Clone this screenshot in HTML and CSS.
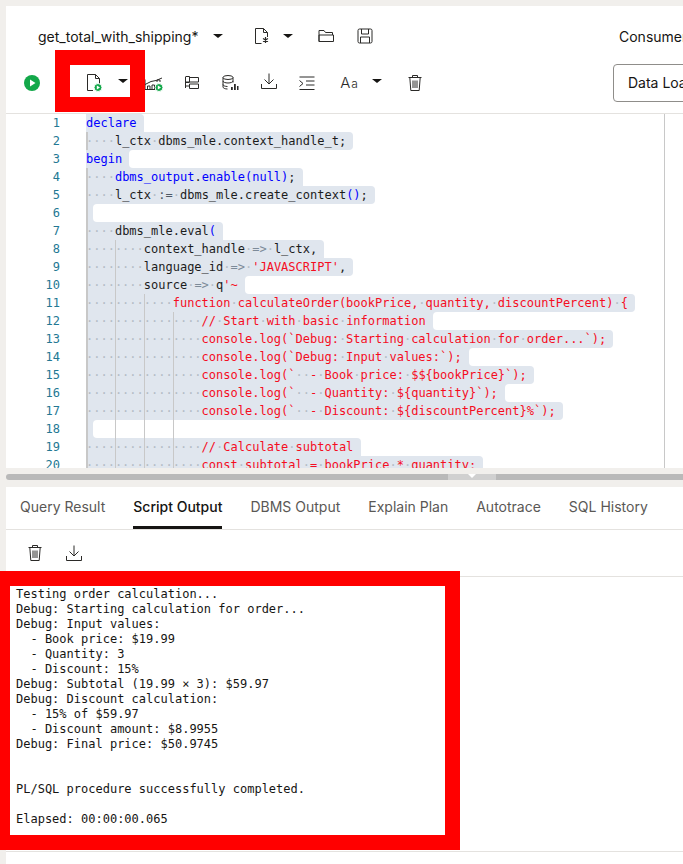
FILE: index.html
```html
<!DOCTYPE html>
<html lang="en">
<head>
<meta charset="utf-8">
<title>SQL Worksheet</title>
<link rel="stylesheet" href="styles.css">
</head>
<body>
<main class="panel">
  <header class="head">
    <div class="row row-one">
      <span class="title">get_total_with_shipping*</span>
      <span class="cell caret-cell title-caret"><svg class="caret" viewBox="0 0 10 4"><path d="M0 0h10L5 4z"/></svg></span>
      <span class="cell new-cell"><svg class="ic" width="20" height="20" viewBox="0 0 20 20"><path d="M10.500 17.500H4.500V2.500h8l4 4v4.500M12.500 2.500v4h4"/><path d="M14.500 11v6M12 12.500l5 3M17 12.500l-5 3" class="thin"/></svg></span>
      <span class="cell caret-cell"><svg class="caret" viewBox="0 0 10 4"><path d="M0 0h10L5 4z"/></svg></span>
      <span class="cell folder-cell"><svg class="ic" width="20" height="20" viewBox="0 0 20 20"><path d="M3 15.500V4.500h5l1.500 2h7v2.500M3 9h14.500v6.500H3z"/></svg></span>
      <span class="cell"><svg class="ic" width="20" height="20" viewBox="0 0 20 20"><path d="M3 4.500A1.500 1.500 0 0 1 4.500 3h11A1.500 1.500 0 0 1 17 4.500v11a1.500 1.500 0 0 1-1.500 1.500h-11A1.500 1.500 0 0 1 3 15.500zM6.500 3v5h7V3M5.500 17v-6h9v6"/></svg></span>
      <span class="schema">Consumer</span>
    </div>
    <div class="row row-two">
      <span class="cell"><svg width="18" height="18" viewBox="0 0 18 18"><circle cx="9" cy="9" r="8" fill="#13a84a"/><path d="M7 5.500l5.500 3.500L7 12.500z" fill="#fff"/></svg></span>
      <span class="cell run-file"><svg class="ic" width="20" height="20" viewBox="0 0 20 20"><path d="M9 17.500H3.500V1.500h8l4 4v5M11.500 1.500v4h4"/><circle cx="14" cy="14.500" r="4" class="go"/><path d="M12.800 12.500l3.200 2-3.200 2z" class="tri"/></svg></span>
      <span class="cell caret-cell"><svg class="caret" viewBox="0 0 10 4"><path d="M0 0h10L5 4z"/></svg></span>
      <span class="cell chart-cell"><svg class="ic" width="22" height="20" viewBox="0 0 22 20"><path d="M2 6.500v10h12M2 11.500l6-3 5-1 6-2.500M4.500 16v-3h2.500v3M9 16v-4h2.500v4M14 9V7h3v2"/><circle cx="16" cy="14.500" r="4" class="go"/><path d="M14.800 12.500l3.200 2-3.200 2z" class="tri"/></svg></span>
      <span class="cell"><svg class="ic" width="20" height="20" viewBox="0 0 20 20"><path d="M3.500 4v11M3.500 9.500h4M3.500 3.500h4v5.500h-4M7.500 4.500h9v4.500h-9zM7.500 11h9v4.500h-9zM3.500 13h4"/></svg></span>
      <span class="cell"><svg class="ic" width="20" height="20" viewBox="0 0 20 20"><ellipse cx="8" cy="4.500" rx="5" ry="2"/><path d="M3 4.500v9.500c0 1.100 2 2 4.500 2M13 4.500v5M3 8c0 1.100 2.200 2 5 2s5-.9 5-2M3 11.500c0 1.100 2 2 4.500 2"/><path d="M11 17v-3h1.800v3zM14 17v-6h1.800v6zM17 17v-4h1.500v4z" class="bars"/></svg></span>
      <span class="cell dl-cell"><svg class="ic" width="20" height="20" viewBox="0 0 20 20"><path d="M10 .500V11M5.500 6.500L10 11l4.500-4.500M2.500 11v4.500h15V11"/></svg></span>
      <span class="cell"><svg class="ic" width="20" height="20" viewBox="0 0 20 20"><path d="M2.500 4h15M9 8h8.500M9 12h8.500M2.500 16.500h15M2.500 7.500l3.500 3-3.500 3"/></svg></span>
      <span class="aa">A<small>a</small></span>
      <span class="cell caret-cell"><svg class="caret" viewBox="0 0 10 4"><path d="M0 0h10L5 4z"/></svg></span>
      <span class="cell trash-cell"><svg class="ic" width="20" height="20" viewBox="0 0 20 20"><path d="M3.500 4.500h13M7.500 4.500V2.500h5v2M4.800 4.500l1 13h8.400l1-13M8 7.500v7.500M10 7.500v7.500M12 7.500v7.500"/></svg></span>
      <button class="load">Data Load</button>
    </div>
  </header>

  <section class="editor">
    <div class="ln u"><span class="no">1</span><span class="code"><b>declare</b></span></div>
    <div class="ln"><span class="no">2</span><span class="code"><i>····</i>l_ctx<i>·</i>dbms_mle.context_handle_t;</span></div>
    <div class="ln n"><span class="no">3</span><span class="code"><b>begin</b></span></div>
    <div class="ln u"><span class="no">4</span><span class="code"><i>····</i><b>dbms_output</b>.<b>enable(null)</b>;</span></div>
    <div class="ln"><span class="no">5</span><span class="code"><i>····</i>l_ctx<i>·</i><em class="assign">:=</em><i>·</i>dbms_mle.create_context<b>()</b>;</span></div>
    <div class="ln n"><span class="no">6</span><span class="code"></span></div>
    <div class="ln u"><span class="no">7</span><span class="code"><i>····</i>dbms_mle.eval<b>(</b></span></div>
    <div class="ln u"><span class="no">8</span><span class="code"><i>········</i>context_handle<i>·</i><em>=&gt;</em><i>·</i>l_ctx,</span></div>
    <div class="ln"><span class="no">9</span><span class="code"><i>········</i>language_id<i>·</i><em>=&gt;</em><i>·</i><s>'JAVASCRIPT'</s>,</span></div>
    <div class="ln n"><span class="no">10</span><span class="code"><i>········</i>source<i>·</i><em>=&gt;</em><i>·</i>q<s>'~</s></span></div>
    <div class="ln"><span class="no">11</span><span class="code"><i>············</i><s>function<i>·</i>calculateOrder(bookPrice,<i>·</i>quantity,<i>·</i>discountPercent)<i>·</i>{</s></span></div>
    <div class="ln n"><span class="no">12</span><span class="code"><i>················</i><s>//<i>·</i>Start<i>·</i>with<i>·</i>basic<i>·</i>information</s></span></div>
    <div class="ln"><span class="no">13</span><span class="code"><i>················</i><s>console.log(`Debug:<i>·</i>Starting<i>·</i>calculation<i>·</i>for<i>·</i>order...`);</s></span></div>
    <div class="ln n"><span class="no">14</span><span class="code"><i>················</i><s>console.log(`Debug:<i>·</i>Input<i>·</i>values:`);</s></span></div>
    <div class="ln"><span class="no">15</span><span class="code"><i>················</i><s>console.log(`<i>··</i>-<i>·</i>Book<i>·</i>price:<i>·</i>$${bookPrice}`);</s></span></div>
    <div class="ln n"><span class="no">16</span><span class="code"><i>················</i><s>console.log(`<i>··</i>-<i>·</i>Quantity:<i>·</i>${quantity}`);</s></span></div>
    <div class="ln"><span class="no">17</span><span class="code"><i>················</i><s>console.log(`<i>··</i>-<i>·</i>Discount:<i>·</i>${discountPercent}%`);</s></span></div>
    <div class="ln n"><span class="no">18</span><span class="code"></span></div>
    <div class="ln u"><span class="no">19</span><span class="code"><i>················</i><s>//<i>·</i>Calculate<i>·</i>subtotal</s></span></div>
    <div class="ln"><span class="no">20</span><span class="code"><i>················</i><s>const<i>·</i>subtotal<i>·</i>=<i>·</i>bookPrice<i>·</i>*<i>·</i>quantity;</s></span></div>
    <span class="guide base-a"></span>
    <span class="guide base-b"></span>
    <span class="guide g1"></span>
    <span class="guide g2"></span>
    <span class="guide g3"></span>
    <span class="guide rail"></span>
  </section>

  <div class="split"><span class="grip"><svg width="8" height="4" viewBox="0 0 8 4"><path d="M0 0h8L4 4z" fill="#fff"/></svg></span></div>

  <nav class="tabs">
    <span class="tab">Query Result</span>
    <span class="tab on">Script Output</span>
    <span class="tab">DBMS Output</span>
    <span class="tab">Explain Plan</span>
    <span class="tab">Autotrace</span>
    <span class="tab">SQL History</span>
  </nav>

  <div class="out-bar">
    <span class="cell"><svg class="ic" width="20" height="20" viewBox="0 0 20 20"><path d="M3.500 4.500h13M7.500 4.500V2.500h5v2M4.800 4.500l1 13h8.400l1-13M8 7.500v7.500M10 7.500v7.500M12 7.500v7.500"/></svg></span>
    <span class="cell"><svg class="ic" width="20" height="20" viewBox="0 0 20 20"><path d="M10 2.500V13M5.500 8.500L10 13l4.500-4.500M2.500 13v4.500h15V13"/></svg></span>
  </div>

  <pre class="output">Testing order calculation...
Debug: Starting calculation for order...
Debug: Input values:
  - Book price: $19.99
  - Quantity: 3
  - Discount: 15%
Debug: Subtotal (19.99 × 3): $59.97
Debug: Discount calculation:
  - 15% of $59.97
  - Discount amount: $8.9955
Debug: Final price: $50.9745


PL/SQL procedure successfully completed.

Elapsed: 00:00:00.065</pre>
  <div class="foot"></div>
</main>
<div class="mark mark-run"></div>
<div class="mark mark-out"></div>
</body>
</html>
```
FILE: styles.css
```css
* { box-sizing: border-box; }
html, body { height: 864px; overflow: hidden; }
body {
  margin: 0;
  background: #f1efec;
  font-family: "Inter", "Liberation Sans", sans-serif;
  color: #161513;
  position: relative;
}
.panel {
  margin: 6px 0 0 6px;
  width: 720px;
  background: #fff;
  display: flex;
  flex-direction: column;
  height: 858px;
}
.head { height: 108px; border-bottom: 1px solid #e4e2df; }
.row { display: flex; align-items: center; white-space: nowrap; }
.row-one { height: 50px; padding: 10px 0 0 32px; }
.row-two { height: 50px; padding: 3px 0 0 7px; }
.cell { width: 38px; height: 24px; display: flex; align-items: center; justify-content: center; flex: none; }
.caret-cell { width: 20px; }
.title { font-size: 14px; width: 161px; }
.title-caret { margin-left: 9px; }
.new-cell { margin-left: 16px; width: 34px; }
.folder-cell { margin-left: 8px; width: 40px; }
.schema { font-size: 14px; margin-left: 235px; }
.caret { width: 10px; height: 4px; fill: #161513; }
.row-one .caret { margin-top: -1px; }
.row-two .caret { margin-top: -3px; }
.ic { fill: none; stroke: #2b2a28; stroke-width: 1; }
.ic .thin { stroke-width: 1.2; }
.ic .go { fill: #13a84a; stroke: #fff; stroke-width: 1; }
.ic .tri { fill: #fff; stroke: none; }
.ic .bars { fill: #2b2a28; stroke: none; }
.run-file { margin-left: 24px; }
.chart-cell { margin-left: 2px; }
.dl-cell { margin-left: 1px; }
.aa { width: 36px; margin-left: 5px; text-align: center; font-size: 15px; font-weight: 300; color: #2b2a28; }
.aa small { font-size: 12px; margin-left: 1px; }
.trash-cell { margin-left: 9px; }
.load {
  margin-left: 179px;
  width: 110px;
  height: 38px;
  flex: none;
  padding: 0 0 0 14px;
  text-align: left;
  font: 14px "Inter", "Liberation Sans", sans-serif;
  color: #161513;
  background: #fff;
  border: 1px solid #8f8d8a;
  border-radius: 4px;
}
.editor {
  position: relative;
  height: 354px;
  overflow: hidden;
  font: 12px/18px "DejaVu Sans Mono", monospace;
  color: #1c1c1c;
}
.ln { display: flex; height: 18px; white-space: pre; }
.ln::after { content: ""; flex: 1; background: #fff; }
.no { width: 54px; margin-right: 26px; text-align: right; color: #237893; flex: none; }
.code {
  background: #e0e6ee;
  padding-right: 7.22px;
  border-radius: 0 4px 4px 0;
  flex: none;
}
.ln.u .code { border-bottom-right-radius: 0; }
.ln.n .code { padding-right: 11.22px; border-radius: 0; }
.ln.n::after { margin-left: -4px; border-radius: 4px 0 0 4px; }
.code b { font-weight: 400; color: #0000ff; }
.code i { font-style: normal; color: #b4bcc6; }
.code s { text-decoration: none; color: #f50d1f; }
.code em { font-style: normal; color: #7d8b99; }
.code .assign { color: #4f5965; }
.guide { position: absolute; width: 1px; bottom: 0; background: #c8c8c8; }
.base-a { left: 80px; top: 18px; height: 18px; width: 2px; }
.base-b { left: 80px; top: 54px; width: 2px; }
.g1 { left: 109px; top: 126px; }
.g2 { left: 138px; top: 180px; }
.g3 { left: 167px; top: 198px; }
.rail { left: 658px; top: 0; }
.split { height: 19px; margin-left: -6px; padding-top: 6px; background: #f1efec; position: relative; }
.split::before {
  content: "";
  display: block;
  height: 6px;
  width: 720px;
  margin-left: 6px;
  border-radius: 3px 0 0 3px;
  background: #b9b9b9;
}
.grip {
  position: absolute;
  left: 448px;
  top: 6px;
  width: 48px;
  height: 6px;
  background: #d0d0d0;
  display: flex;
  justify-content: center;
}
.tabs {
  height: 43px;
  padding-left: 14px;
  display: flex;
  gap: 28px;
  border-bottom: 1px solid #e4e2df;
  flex: none;
}
.tab {
  font-size: 14px;
  line-height: 40px;
  height: 42px;
  color: #5a5855;
}
.tab.on { color: #161513; font-weight: 500; border-bottom: 3px solid #161513; }
.out-bar {
  height: 47px;
  padding: 0 0 0 10px;
  display: flex;
  gap: 1px;
  align-items: center;
  border-bottom: 1px solid #e4e2df;
  flex: none;
}
.output {
  margin: 0;
  padding: 10px 0 0 10px;
  height: 275px;
  font: 12px/15px "DejaVu Sans Mono", monospace;
  color: #161513;
  border-bottom: 1px solid #e4e2df;
  flex: none;
}
.foot { flex: 1; }
.mark { position: absolute; border: 15px solid #ff0000; }
.mark-run { left: 55px; top: 50px; width: 90px; height: 62px; }
.mark-out { left: -5px; top: 571px; width: 465px; height: 279px; }
```
